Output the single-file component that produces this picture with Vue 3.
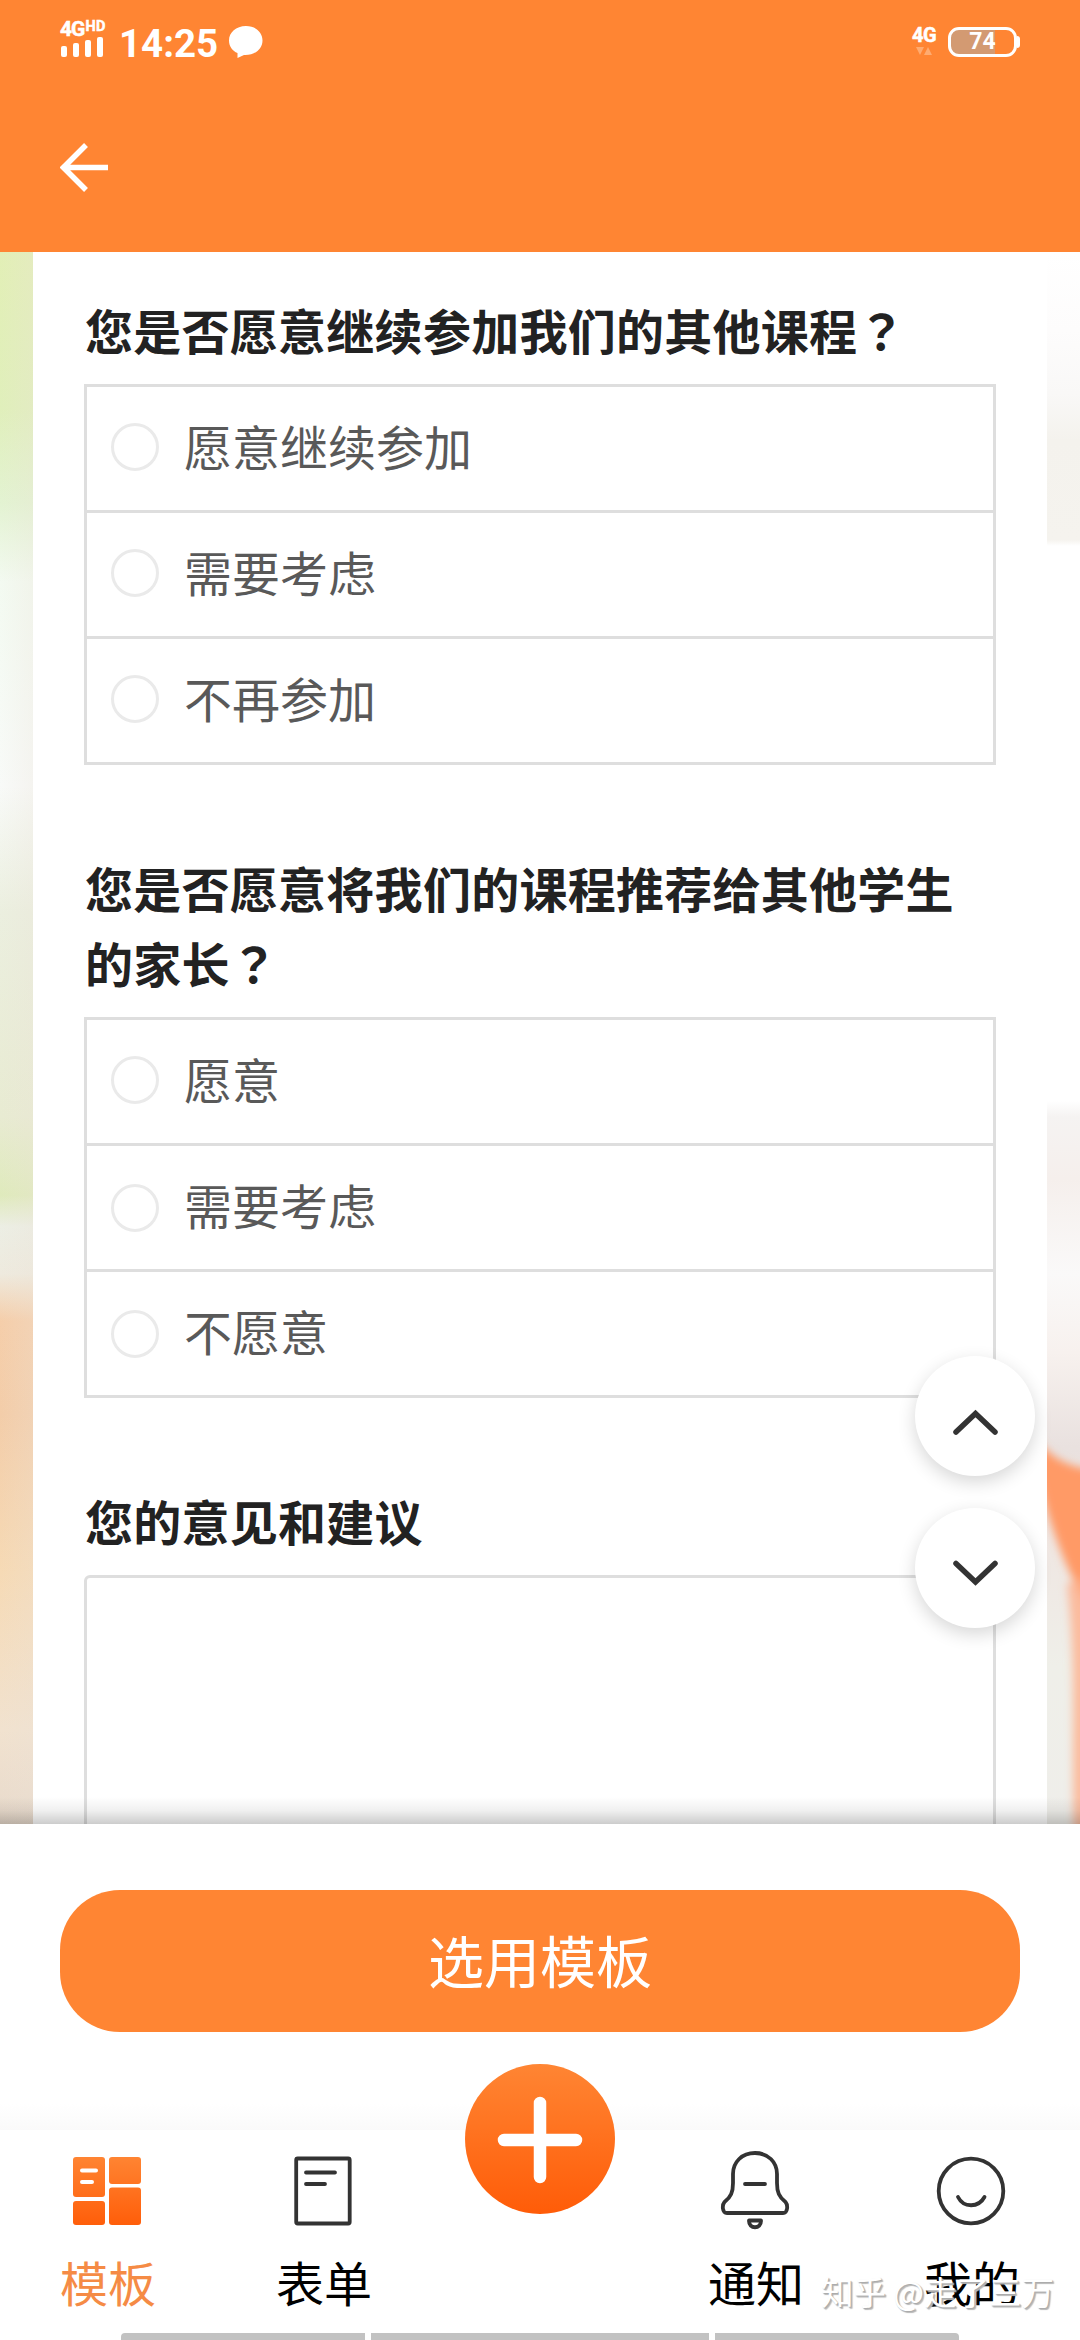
<script setup>
const questions = [
  {
    title: '您是否愿意继续参加我们的其他课程',
    options: ['愿意继续参加', '需要考虑', '不再参加'],
  },
  {
    title: '您是否愿意将我们的课程推荐给其他学生的家长',
    options: ['愿意', '需要考虑', '不愿意'],
  },
]
</script>

<template>
  <div class="screen">
    <header class="header">
      <div class="status">
        <div class="status-left">
          <div class="signal">
            <div class="net">4G<span class="hd">HD</span></div>
            <svg width="44" height="20" viewBox="0 0 44 20" fill="#fff">
              <rect x="1" y="9" width="6" height="11" rx="2" />
              <rect x="13" y="6" width="6" height="14" rx="2" />
              <rect x="25" y="3" width="6" height="17" rx="2" />
              <rect x="37" y="0" width="6" height="20" rx="2" />
            </svg>
          </div>
          <div class="time">14:25</div>
          <svg class="bubble" width="34" height="32" viewBox="0 0 34 32" fill="#fff">
            <path d="M17 0C7 0 0 6.500 0 14.500C0 20.500 3.500 25 8.500 27L8.500 32L15 29C26 29.500 33.500 23 33.500 14.500C33.500 6.500 27 0 17 0Z" />
          </svg>
        </div>
        <div class="status-right">
          <div class="data">
            <div class="net small">4G</div>
            <svg width="16" height="8" viewBox="0 0 16 8" fill="#ffab70"><path d="M0 0H8L4 8ZM8 8H16L12 0Z" /></svg>
          </div>
          <div class="battery"><span>74</span></div>
          <div class="battery-tip"></div>
        </div>
      </div>
      <svg class="back" width="50" height="50" viewBox="0 0 50 50" fill="none" stroke="#fff" stroke-width="5.500">
        <path d="M26 2L3.500 24.500L26 47M4 24.500H48" />
      </svg>
    </header>

    <main class="page">
      <div class="side left"></div>
      <div class="card">
        <section v-for="q in questions" :key="q.title" class="question">
          <h2>{{ q.title }}<span class="mark">？</span></h2>
          <ul>
            <li v-for="o in q.options" :key="o"><i class="radio"></i><span>{{ o }}</span></li>
          </ul>
        </section>
        <section class="question">
          <h2>您的意见和建议</h2>
          <div class="textarea"></div>
        </section>
      </div>
      <div class="side right">
        <svg width="33" height="420" viewBox="0 0 33 420">
          <defs><filter id="soft" x="-50%" y="-10%" width="200%" height="120%"><feGaussianBlur stdDeviation="4" /></filter></defs>
          <g filter="url(#soft)">
            <path d="M-10 36C5 54 20 62 45 66V205C25 180 8 140 -10 70Z" fill="#ff9a66" />
            <path d="M45 170V430H27C24 330 30 260 20 180Z" fill="#ffab86" opacity=".75" />
          </g>
        </svg>
      </div>
      <div class="page-shade"></div>
      <div class="scrollers">
        <button class="round"><svg width="48" height="30" viewBox="0 0 48 30"><path d="M5 26L24.500 7.500L44 26" /></svg></button>
        <button class="round"><svg width="48" height="30" viewBox="0 0 48 30"><path d="M5 5.500L24.500 24L44 5.500" /></svg></button>
      </div>
    </main>

    <div class="action"><button class="use">选用模板</button></div>

    <nav class="tabs">
      <div class="tab active">
        <svg width="80" height="84" viewBox="0 0 80 84">
          <defs>
            <linearGradient id="orange" gradientUnits="userSpaceOnUse" x1="0" y1="8" x2="0" y2="76">
              <stop offset="0" stop-color="#ff8432" /><stop offset="1" stop-color="#ff5e0a" />
            </linearGradient>
          </defs>
          <g fill="url(#orange)">
            <rect x="5" y="8" width="32" height="40" rx="3" />
            <rect x="41" y="8" width="32" height="27" rx="3" />
            <rect x="5" y="52" width="32" height="24" rx="3" />
            <rect x="41" y="38.500" width="32" height="37.500" rx="3" />
          </g>
          <path d="M14 21.500H28M14 33H24" stroke="#fff" stroke-width="4" stroke-linecap="round" />
        </svg>
        <span>模板</span>
      </div>
      <div class="tab">
        <svg class="line" width="80" height="84" viewBox="0 0 80 84">
          <rect x="12.200" y="9.500" width="53.500" height="65" rx="1.500" />
          <path d="M22 23.500H51M22 35H41" />
        </svg>
        <span>表单</span>
      </div>
      <div class="tab">
        <div class="plus">
          <svg width="150" height="150" viewBox="0 0 150 150"><path d="M75 39V113M39 76H111" stroke="#fff" stroke-width="12.500" stroke-linecap="round" /></svg>
        </div>
      </div>
      <div class="tab">
        <svg class="line" width="80" height="84" viewBox="0 0 80 84">
          <path d="M39 4C26 4 17 13 17 25V34C17 43 15 48 8.500 53C6 56 6 64 11 64H67C72 64 72 56 69.500 53C63 48 61 43 61 34V25C61 13 52 4 39 4Z" />
          <path d="M29 35H49M33 71.500H45C45.500 80.500 32.500 80.500 33 71.500Z" />
        </svg>
        <span>通知</span>
      </div>
      <div class="tab">
        <svg class="line" width="80" height="84" viewBox="0 0 80 84">
          <circle cx="39" cy="42" r="32.300" />
          <path d="M26 48C31.500 59 46.500 59 52.500 48" />
        </svg>
        <span>我的</span>
      </div>
      <div class="watermark">知乎 @走了三万</div>
      <div class="homebar"><i></i><i class="mid"></i><i></i></div>
    </nav>
  </div>
</template>

<style>
body { margin: 0; }
</style>

<style scoped>
* { box-sizing: border-box; }
.screen {
  width: 1080px; height: 2340px; overflow: hidden; background: #fff;
  display: flex; flex-direction: column;
  font-family: "Noto Sans CJK SC", sans-serif;
}
.header { height: 252px; flex: none; background: #ff8533; display: flex; flex-direction: column; }
.status {
  height: 84px; display: flex; justify-content: space-between;
  padding: 0 60px; color: #fff; font-family: Roboto, sans-serif; font-weight: 700;
}
.status-left, .status-right { display: flex; align-items: flex-start; }
.signal { width: 46px; padding-top: 21px; }
.net { font-size: 21px; line-height: 17px; height: 16px; letter-spacing: -1px; white-space: nowrap; display: flex; align-items: flex-start; -webkit-text-stroke: .5px #fff; }
.net .hd { font-size: 14.5px; line-height: 11px; letter-spacing: .3px; margin-left: 1px; }
.signal svg { display: block; }
.time { font-size: 38.5px; line-height: 46px; margin: 21px 0 0 13px; width: 98px; white-space: nowrap; }
.bubble { margin: 26px 0 0 12px; }
.data { width: 24px; padding-top: 27px; margin-right: 12px; }
.net.small { font-size: 20px; letter-spacing: -.5px; }
.data svg { display: block; margin: 4px 0 0 4px; }
.battery {
  width: 69px; height: 30px; margin-top: 27px; border: 3px solid #fff; border-radius: 11px;
  background: linear-gradient(90deg, #d39a72 70%, transparent 70%);
  display: flex; align-items: center; justify-content: center; font-size: 23px; line-height: 24px;
}
.battery-tip { width: 3px; height: 12px; margin: 36px 0 0 0; background: #fff; border-radius: 0 3px 3px 0; }
.back { margin: 59px 0 0 60px; display: block; }

.page { position: relative; flex: none; height: 1572px; display: flex; overflow: hidden; }
.side { flex: none; width: 33px; }
.side.left {
  background:
    linear-gradient(90deg, rgba(255,255,255,0), rgba(235,225,215,.25)),
    linear-gradient(180deg, #e2efb6 0, #e0efbb 10%, #e3f3d2 16%, #f3faf1 21%, #f8faf8 34%, #ebefdf 42%, #e8ebd2 55%, #dfeabc 60%, #eceee4 62%, #eeeade 65%, #f5ceaa 68%, #f3cda9 74%, #f6dab5 84%, #f1e2cf 94%, #e8dacc 100%);
}
.side.right {
  display: flex; align-items: flex-end; overflow: hidden;
  background: linear-gradient(180deg, #fff 0, #fdfcfc 5%, #f9f8f7 9%, #f4f2ed 12%, #f5f3ee 18.300%, #fff 18.700%, #fff 54%, #f5f3f2 55%, #f5efec 59%, #faf9f9 65%, #f7f1ee 70%, #e9e1df 76%, #efe6e2 82%, #efefe9 90%, #efeeea 100%);
}
.side.right svg { display: block; }
.card { flex: 1; background: #fff; padding: 43px 51px 0; }
.question { margin-bottom: 88px; }
h2 { margin: -3px 0 17px; padding-left: 1px; font-size: 48px; line-height: 75px; font-weight: 700; color: #222; letter-spacing: .27px; white-space: normal; }
.question + .question { padding-top: .1px; }
.mark { font-family: "Noto Sans CJK TC", sans-serif; }
ul { margin: 0; padding: 0; list-style: none; border: 3px solid #dedede; width: 912px; }
li { height: 126px; display: flex; align-items: center; padding: 0 0 0 24px; font-size: 48px; color: #595959; border-bottom: 3px solid #dedede; }
li:last-child { border-bottom: 0; height: 123px; }
li span { margin-top: -8px; }
.radio { width: 48px; height: 48px; border: 3px solid #eaeaea; border-radius: 50%; margin-right: 25px; margin-top: -4px; }
.question + .question li + li .radio { margin-top: 0; }
.textarea { width: 912px; height: 420px; border: 3px solid #dedede; border-radius: 6px; }
.page-shade { position: absolute; left: 0; right: 0; bottom: 0; height: 27px; background: linear-gradient(180deg, rgba(0,0,0,0), rgba(0,0,0,.06) 50%, rgba(0,0,0,.2)); }
.scrollers { position: absolute; right: 45px; top: 1104px; display: flex; flex-direction: column; gap: 32px; }
.round {
  width: 120px; height: 120px; padding: 9px 0 0; border: 0; border-radius: 50%; background: #fff;
  box-shadow: 0 6px 18px rgba(0,0,0,.16); display: flex; align-items: center; justify-content: center;
}
.round svg { fill: none; stroke: #333; stroke-width: 5.5; stroke-linecap: round; stroke-linejoin: miter; }

.action { flex: none; height: 306px; padding: 66px 60px 0; background: linear-gradient(180deg, #fff 280px, #fafafa 306px); }
.use {
  display: block; width: 960px; height: 142px; border: 0; border-radius: 60px; background: #ff8533;
  color: #fff; font: 400 56px/138px "Noto Sans CJK SC", sans-serif; padding: 0 0 4px;
}
.tabs { position: relative; flex: none; height: 210px; display: flex; background: #fff; }
.tab { width: 216px; display: flex; flex-direction: column; align-items: center; padding-top: 19px; font-size: 48px; color: #000; }
.tab.active { color: #f58b45; }
.tab span { line-height: 70px; margin-top: 13px; }
.line { fill: none; stroke: #333; stroke-width: 3.8; stroke-linecap: round; stroke-linejoin: round; }
.plus { width: 150px; height: 150px; margin-top: -85px; border-radius: 50%; background: linear-gradient(180deg, #ff8533, #ff5c08); flex: none; }
.plus svg { display: block; }
.watermark {
  position: absolute; left: 821px; top: 137px; font-size: 32.5px; line-height: 48px; white-space: nowrap;
  color: #fff; text-shadow: 1px 1px 1px #aaa, 2px 2px 1px #bbb;
}
.homebar { position: absolute; left: 121px; bottom: 0; display: flex; gap: 6px; }
.homebar i { width: 244px; height: 7px; background: #c2c2c2; border-radius: 4px 0 0 0; }
.homebar i.mid { width: 338px; border-radius: 0; }
.homebar i:last-child { border-radius: 0 4px 0 0; }
</style>
